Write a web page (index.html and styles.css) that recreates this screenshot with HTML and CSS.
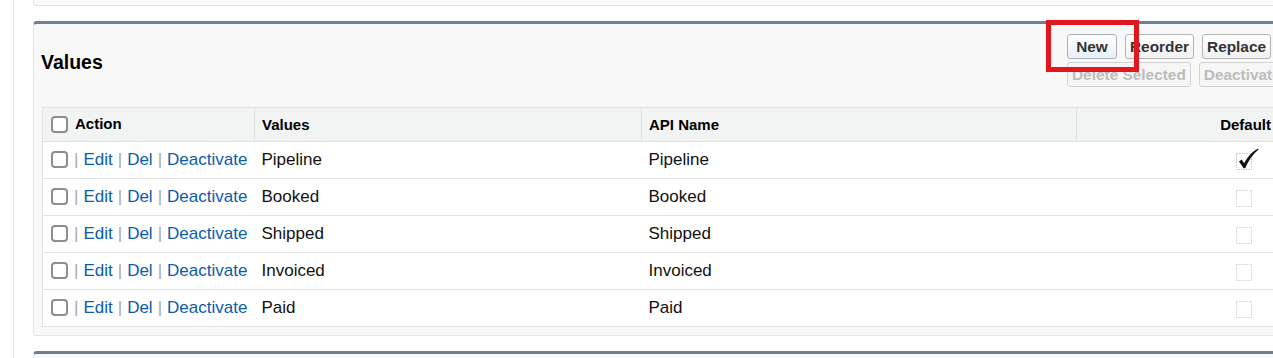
FILE: index.html
```html
<!DOCTYPE html>
<html>
<head>
<meta charset="utf-8">
<link rel="stylesheet" href="styles.css">
</head>
<body>
<div class="page">
  <div class="card-prev"></div>
  <div class="card">
    <div class="highlight"></div>
    <div class="card-head">
      <h2 class="title">Values</h2>
      <div class="btn-area">
        <div class="btn-row">
          <button class="btn btn-new">New</button>
          <button class="btn">Reorder</button>
          <button class="btn">Replace</button>
        </div>
        <div class="btn-row">
          <button class="btn btn-disabled">Delete Selected</button>
          <button class="btn btn-disabled">Deactivate</button>
        </div>
      </div>
    </div>
    <table class="list">
      <colgroup>
        <col class="c-action"><col class="c-values"><col class="c-api"><col class="c-default">
      </colgroup>
      <thead>
        <tr>
          <th><span class="cbx"></span><span class="th-label">Action</span></th>
          <th>Values</th>
          <th>API Name</th>
          <th class="th-default">Default</th>
        </tr>
      </thead>
      <tbody>
        <tr>
          <td class="act"><span class="cbx"></span><span class="sep">|</span><a href="#">Edit</a><span class="sep">|</span><a href="#">Del</a><span class="sep">|</span><a href="#">Deactivate</a></td>
          <td>Pipeline</td>
          <td>Pipeline</td>
          <td class="def"><svg class="chk" width="26" height="24" viewBox="0 0 26 24"><rect x="0.5" y="5.5" width="15" height="16" fill="none" stroke="#c2c2c2" stroke-width="1" stroke-dasharray="1.5 1"/><path d="M3 13.5 L5.6 11.4 L8.2 15.2 C11.2 9.4 15.4 4.4 22 0.6 L22.6 1.4 C16.8 6.2 12.4 12.4 9.2 20.2 L7.6 20.2 Z" fill="#111"/></svg></td>
        </tr>
        <tr>
          <td class="act"><span class="cbx"></span><span class="sep">|</span><a href="#">Edit</a><span class="sep">|</span><a href="#">Del</a><span class="sep">|</span><a href="#">Deactivate</a></td>
          <td>Booked</td>
          <td>Booked</td>
          <td class="def"><svg class="chk" width="26" height="24" viewBox="0 0 26 24"><rect x="0.5" y="5.5" width="15" height="16" fill="none" stroke="#d2d2d2" stroke-width="1" stroke-dasharray="1.5 1"/></svg></td>
        </tr>
        <tr>
          <td class="act"><span class="cbx"></span><span class="sep">|</span><a href="#">Edit</a><span class="sep">|</span><a href="#">Del</a><span class="sep">|</span><a href="#">Deactivate</a></td>
          <td>Shipped</td>
          <td>Shipped</td>
          <td class="def"><svg class="chk" width="26" height="24" viewBox="0 0 26 24"><rect x="0.5" y="5.5" width="15" height="16" fill="none" stroke="#d2d2d2" stroke-width="1" stroke-dasharray="1.5 1"/></svg></td>
        </tr>
        <tr>
          <td class="act"><span class="cbx"></span><span class="sep">|</span><a href="#">Edit</a><span class="sep">|</span><a href="#">Del</a><span class="sep">|</span><a href="#">Deactivate</a></td>
          <td>Invoiced</td>
          <td>Invoiced</td>
          <td class="def"><svg class="chk" width="26" height="24" viewBox="0 0 26 24"><rect x="0.5" y="5.5" width="15" height="16" fill="none" stroke="#d2d2d2" stroke-width="1" stroke-dasharray="1.5 1"/></svg></td>
        </tr>
        <tr>
          <td class="act"><span class="cbx"></span><span class="sep">|</span><a href="#">Edit</a><span class="sep">|</span><a href="#">Del</a><span class="sep">|</span><a href="#">Deactivate</a></td>
          <td>Paid</td>
          <td>Paid</td>
          <td class="def"><svg class="chk" width="26" height="24" viewBox="0 0 26 24"><rect x="0.5" y="5.5" width="15" height="16" fill="none" stroke="#d2d2d2" stroke-width="1" stroke-dasharray="1.5 1"/></svg></td>
        </tr>
      </tbody>
    </table>
  </div>
  <div class="card-next"></div>
</div>
</body>
</html>
```
FILE: styles.css
```css
html, body {
  margin: 0;
  padding: 0;
  background: #ffffff;
  overflow: hidden;
}
body {
  font-family: "Liberation Sans", Arial, sans-serif;
  color: #000;
  width: 1273px;
  height: 358px;
}
.page {
  margin-left: 13px;
  border-left: 1px solid #e6e6e6;
  padding-left: 19px;
  height: 358px;
  width: 1320px;
  box-sizing: border-box;
}
.card-prev {
  height: 5px;
  background: #f9f9f9;
  border: 1px solid #e2e2e2;
  border-top: none;
  border-radius: 0 0 4px 4px;
  margin-bottom: 15px;
}
.card {
  position: relative;
  background: #f8f8f8;
  border: 1px solid #e4e4e4;
  border-top: 3px solid #737d95;
  border-radius: 4px;
  padding: 10px 8px 8px 8px;
}
.card-next {
  margin-top: 15px;
  height: 20px;
  background: #f8f8f8;
  border: 1px solid #e4e4e4;
  border-top: 3px solid #737d95;
  border-radius: 4px 4px 0 0;
}
.highlight {
  position: absolute;
  left: 1012px;
  top: -4px;
  width: 93px;
  height: 52px;
  box-sizing: border-box;
  border: 5px solid #e3161d;
  z-index: 5;
}
.card-head {
  display: flex;
  align-items: center;
  height: 54px;
  margin-bottom: 19px;
}
.title {
  margin: 0;
  font-size: 19.5px;
  font-weight: bold;
  flex: 0 0 1025px;
  position: relative;
  top: 1px;
  left: -1px;
}
.btn-area {
  display: flex;
  flex-direction: column;
  gap: 3px;
  align-self: flex-start;
}
.btn-row {
  display: flex;
  gap: 8px;
}
.btn {
  font-family: "Liberation Sans", Arial, sans-serif;
  font-size: 15.4px;
  font-weight: bold;
  color: #333;
  height: 25px;
  min-width: 50px;
  padding: 0 4px;
  line-height: 23px;
  border: 1px solid #b5b5b5;
  border-radius: 3px;
  background: linear-gradient(#ffffff, #f1f1f1);
  white-space: nowrap;
  margin: 0;
}
.btn-new {
  background: linear-gradient(#ffffff, #e9f0f7);
  border-color: #a9b2bd;
}
.btn-disabled {
  color: #bdbdbd;
  border-color: #d2d2d2;
  background: #f6f6f6;
}
.list {
  border-collapse: collapse;
  table-layout: fixed;
  width: 1234px;
  background: #fff;
  border: 1px solid #e0e3e5;
}
.c-action { width: 212px; }
.c-values { width: 387px; }
.c-api { width: 435px; }
.c-default { width: 200px; }
.list th {
  background: #f2f3f3;
  font-size: 15px;
  font-weight: bold;
  text-align: left;
  height: 33px;
  padding: 0 7px;
  border: 1px solid #e0e3e5;
  vertical-align: middle;
  white-space: nowrap;
}
.list th:first-child {
  padding-left: 8px;
}
.list th.th-default {
  text-align: right;
  padding-right: 5px;
}
.th-label {
  vertical-align: middle;
  margin-left: 6px;
  position: relative;
  top: -2px;
}
.list td {
  font-size: 17px;
  height: 36px;
  padding: 0 7px;
  border-bottom: 1px solid #e3e3e3;
  vertical-align: middle;
  white-space: nowrap;
  color: #111;
}
.list td.act {
  padding-left: 8px;
}
.list td.def {
  padding: 0 14px 0 0;
}
.cbx {
  display: inline-block;
  width: 17px;
  height: 17px;
  box-sizing: border-box;
  border: 2px solid #8d8d8d;
  border-radius: 4px;
  background: #fff;
  vertical-align: middle;
  position: relative;
  top: -1px;
  margin-right: 1px;
}
.sep {
  color: #a6a6a6;
  margin: 0 5px 0 5px;
}
.act a {
  color: #0b5cab;
  text-decoration: none;
}
.chk {
  display: block;
  margin: 0 0 0 auto;
}
```
